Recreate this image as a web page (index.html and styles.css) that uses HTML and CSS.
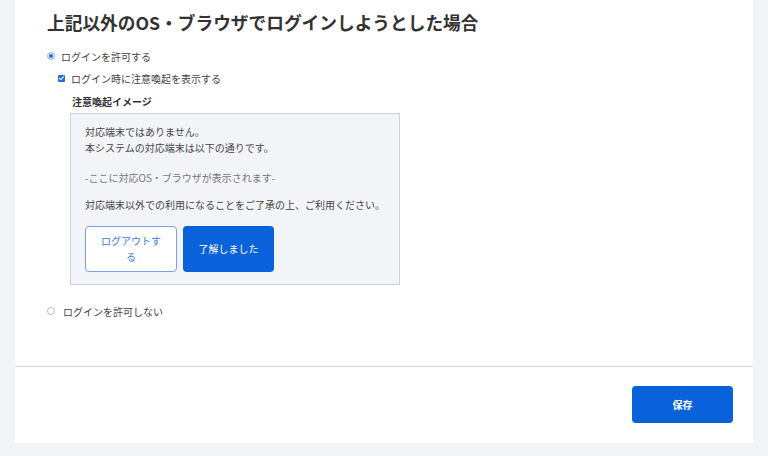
FILE: index.html
```html
<!DOCTYPE html>
<html lang="ja">
<head>
  <meta charset="UTF-8">
  <meta name="viewport" content="width=device-width, initial-scale=1.0">
  <title>ログイン設定</title>
  <link rel="stylesheet" href="styles.css">
</head>
<body>
  <div class="card">
    <div class="content">
      <h2 class="title">上記以外のOS・ブラウザでログインしようとした場合</h2>

      <label class="option option-first">
        <span class="radio radio-on"></span>
        ログインを許可する
      </label>

      <div class="sub">
        <label class="option">
          <span class="check"></span>
          ログイン時に注意喚起を表示する
        </label>

        <div class="preview">
          <p class="preview-label">注意喚起イメージ</p>
          <div class="preview-box">
            <p class="msg">対応端末ではありません。<br>本システムの対応端末は以下の通りです。</p>
            <p class="msg msg-gray">-ここに対応OS・ブラウザが表示されます-</p>
            <p class="msg">対応端末以外での利用になることをご了承の上、ご利用ください。</p>
            <div class="preview-buttons">
              <button class="btn btn-outline">ログアウトす<br>る</button>
              <button class="btn btn-primary">了解しました</button>
            </div>
          </div>
        </div>
      </div>

      <label class="option option-last">
        <span class="radio"></span>
        ログインを許可しない
      </label>
    </div>

    <div class="footer">
      <button class="save-button">保存</button>
    </div>
  </div>
</body>
</html>
```

FILE: styles.css
```css
body {
  margin: 0;
  background-color: #f3f4f8;
  color: #333;
  font-family: 'Noto Sans CJK JP', 'Noto Sans', sans-serif;
}

.card {
  margin-left: 15px;
  width: 738px;
  background-color: #fff;
}

.content {
  height: 366px;
  padding: 0 32px;
  box-sizing: border-box;
}

.title {
  margin: 0;
  font-size: 17.7px;
  line-height: 44px;
  font-weight: bold;
  color: #333;
}

.option {
  display: flex;
  align-items: center;
  gap: 6px;
  height: 22px;
  font-size: 10px;
  color: #444;
}

.option-first {
  margin-top: 1px;
}

.option-last {
  margin-top: 15px;
  gap: 8px;
}

.radio {
  width: 8px;
  height: 8px;
  border: 1px solid #bbb;
  border-radius: 50%;
  box-sizing: border-box;
}

.radio-on {
  border: 1px solid #a9c8f5;
  background-color: #1d6fe0;
  box-shadow: inset 0 0 0 1px #fff;
}

.check {
  width: 7px;
  height: 7px;
  background-color: #1d6fe0;
  border-radius: 1px;
  position: relative;
}

.check::after {
  content: '';
  position: absolute;
  left: 2px;
  top: 0.5px;
  width: 2px;
  height: 4px;
  border: solid #fff;
  border-width: 0 1px 1px 0;
  transform: rotate(45deg);
}

.sub {
  padding-left: 11px;
}

.preview {
  padding-left: 12px;
  padding-top: 3px;
}

.preview-label {
  margin: 0;
  padding-left: 2px;
  font-size: 10px;
  line-height: 20px;
  font-weight: bold;
  color: #333;
}

.preview-box {
  margin-top: 1px;
  width: 330px;
  box-sizing: border-box;
  padding: 10px 14px 12px;
  background-color: #f3f4f8;
  border: 1px solid #cfd1d6;
}

.msg {
  margin: 0 0 14px;
  font-size: 10px;
  line-height: 16px;
  color: #444;
}

.msg-gray {
  color: #777;
  margin-bottom: 11px;
}

.preview-buttons {
  display: flex;
  gap: 6px;
  margin-top: -1px;
}

.btn {
  width: 92px;
  height: 46px;
  border-radius: 4px;
  font-family: inherit;
  font-size: 10px;
  line-height: 16px;
  padding: 0 10px;
  cursor: pointer;
}

.btn-outline {
  background-color: #fff;
  border: 1px solid #74a3ec;
  color: #3b7be0;
}

.btn-primary {
  width: 91px;
  background-color: #0a62da;
  border: none;
  color: #fff;
}

.footer {
  border-top: 1px solid #d4d4d4;
  display: flex;
  justify-content: flex-end;
  padding: 19px 20px 20px;
}

.save-button {
  width: 101px;
  height: 37px;
  border: none;
  border-radius: 4px;
  background-color: #0a62da;
  color: #fff;
  font-family: inherit;
  font-size: 10px;
  font-weight: bold;
  cursor: pointer;
}
```
